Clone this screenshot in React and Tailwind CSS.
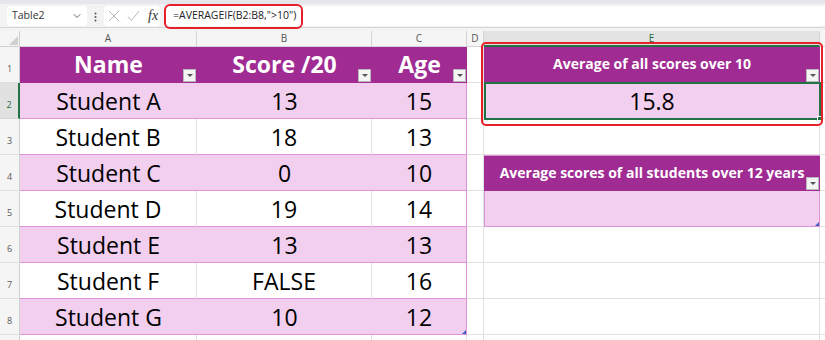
import React from "react";
import { ChevronDown } from "lucide-react";

function Filter() {
  return (
    <div className="absolute right-[1px] bottom-[1px] w-[13px] h-[13px] bg-[#f4f4f4] border border-[#b8b8b8] flex items-center justify-center">
      <div className="w-0 h-0 border-x-[3px] border-x-transparent border-t-[3px] border-t-[#555]" />
    </div>
  );
}

function ResizeMark() {
  return (
    <div className="absolute right-0 bottom-0 w-0 h-0 border-l-[4px] border-l-transparent border-b-[4px] border-b-[#3f5bbf]" />
  );
}

const rows = [
  ["Student A", "13", "15"],
  ["Student B", "18", "13"],
  ["Student C", "0", "10"],
  ["Student D", "19", "14"],
  ["Student E", "13", "13"],
  ["Student F", "FALSE", "16"],
  ["Student G", "10", "12"],
];

function RowHeader({ n, selected }) {
  return (
    <div
      className={
        selected
          ? "h-[36px] flex items-end justify-center pb-[7px] text-[9px] text-[#1e6b41] bg-[#e1e1e1] border-r-2 border-r-[#217346] border-b border-b-[#d6d6d6]"
          : "h-[36px] flex items-end justify-center pb-[7px] text-[9px] text-[#555] bg-[#f5f5f5] border-r border-r-[#cfcfcf] border-b border-b-[#dedede]"
      }
    >
      {n}
    </div>
  );
}

function ECell({ r }) {
  if (r === 1)
    return (
      <div className="relative h-[36px] bg-[#a02b93] text-white font-bold text-[14px] flex items-center justify-center pb-[3px]">
        Average of all scores over 10
        <Filter />
      </div>
    );
  if (r === 2)
    return (
      <div className="h-[36px] bg-[#f2ceef] text-[23px] text-black flex items-center justify-center pt-[1px]">
        15.8
      </div>
    );
  if (r === 4)
    return (
      <div className="relative h-[36px] bg-[#a02b93] text-white font-bold text-[14px] flex items-center justify-center pb-[2px] border-t border-t-[#dd93d6]">
        Average scores of all students over 12 years
        <Filter />
      </div>
    );
  if (r === 5)
    return (
      <div className="relative h-[36px] bg-[#f2ceef] border-x border-b border-[#dd93d6]">
        <ResizeMark />
      </div>
    );
  return <div className="h-[36px] bg-white border-r border-b border-[#e1e1e1]" />;
}

export default function App() {
  return (
    <div className="w-[825px] h-[340px] overflow-hidden bg-white relative font-['Open_Sans',sans-serif] text-black">
      {/* Toolbar */}
      <div className="h-[4px] bg-[#e5e7ea]" />
      <div className="h-[23px] flex bg-[#f3f3f3]">
        <div className="ml-[7px] mt-[2px] w-[80px] h-[20px] bg-white rounded-[4px] flex items-center justify-between pl-[5px] pr-[4px]">
          <span className="text-[10.5px] text-[#333]">Table2</span>
          <ChevronDown size={12} strokeWidth={1.6} color="#444" />
        </div>
        <div className="w-[17px] flex items-center justify-center mt-[2px]">
          <svg width="3" height="10" viewBox="0 0 3 10">
            <circle cx="1.5" cy="1.5" r="1" fill="#555" />
            <circle cx="1.5" cy="5" r="1" fill="#555" />
            <circle cx="1.5" cy="8.5" r="1" fill="#555" />
          </svg>
        </div>
        <div className="mt-[2px] w-[56px] h-[20px] bg-white rounded-[4px] flex items-center pl-[3px]">
          <svg width="12" height="12" viewBox="0 0 12 12" className="ml-[1px]">
            <path d="M1 1 L11 11 M11 1 L1 11" stroke="#b8b8b8" strokeWidth="1" fill="none" />
          </svg>
          <svg width="13" height="12" viewBox="0 0 13 12" className="ml-[7px]">
            <path d="M1 6.5 L4.5 10.5 L12 1" stroke="#b8b8b8" strokeWidth="1" fill="none" />
          </svg>
          <span className="ml-[8px] font-['Liberation_Serif',serif] italic text-[14px] text-[#333] leading-none">
            fx
          </span>
        </div>
        <div className="ml-[4px] mt-[2px] flex-1 h-[20px] bg-white flex items-center pl-[9px]">
          <span className="text-[10.5px] text-[#222]">=AVERAGEIF(B2:B8,"&gt;10")</span>
        </div>
      </div>
      <div className="h-[1px] bg-[#d5d5d5]" />
      <div className="h-[3px] bg-[#f3f3f3]" />

      {/* Grid */}
      <div className="relative grid grid-cols-[20px_177px_175px_95px_17px_336px_5px]">
        {/* column headers */}
        <div className="relative h-[16px] bg-[#f5f5f5] border-r border-b border-[#cfcfcf]">
          <div className="absolute right-[1px] bottom-[1px] w-0 h-0 border-l-[9px] border-l-transparent border-b-[9px] border-b-[#d0d0d0]" />
        </div>
        <div className="h-[16px] bg-[#f5f5f5] border-r border-b border-[#d4d4d4] text-[10px] text-[#555] flex items-center justify-center">A</div>
        <div className="h-[16px] bg-[#f5f5f5] border-r border-b border-[#d4d4d4] text-[10px] text-[#555] flex items-center justify-center">B</div>
        <div className="h-[16px] bg-[#f5f5f5] border-r border-b border-[#d4d4d4] text-[10px] text-[#555] flex items-center justify-center">C</div>
        <div className="h-[16px] bg-[#f5f5f5] border-r border-b border-[#d4d4d4] text-[10px] text-[#555] flex items-center justify-center">D</div>
        <div className="h-[16px] bg-[#e3e3e3] border-r border-r-[#d4d4d4] border-b-2 border-b-[#217346] text-[10px] text-[#1e6b41] flex items-center justify-center">E</div>
        <div className="h-[16px] bg-[#f5f5f5] border-b border-[#d4d4d4]" />

        {/* Row 1: table header */}
        <RowHeader n={1} />
        <div className="relative h-[36px] bg-[#a02b93] text-white font-bold text-[23px] flex items-center justify-center pb-[1px]">
          Name
          <Filter />
        </div>
        <div className="relative h-[36px] bg-[#a02b93] text-white font-bold text-[23px] flex items-center justify-center pb-[1px]">
          Score /20
          <Filter />
        </div>
        <div className="relative h-[36px] bg-[#a02b93] text-white font-bold text-[23px] flex items-center justify-center pb-[1px]">
          Age
          <Filter />
        </div>
        <div className="h-[36px] bg-white border-r border-b border-[#e1e1e1]" />
        <ECell r={1} />
        <div className="h-[36px] bg-white border-b border-[#e1e1e1]" />

        {rows.map((row, i) => {
          const r = i + 2;
          const pink = i % 2 === 0;
          const last = i === rows.length - 1;
          return (
            <React.Fragment key={r}>
              <RowHeader n={r} selected={r === 2} />
              <div
                className={
                  pink
                    ? "h-[36px] bg-[#f2ceef] border-b border-b-[#dd93d6] text-[23px] flex items-center justify-center pt-[1px]"
                    : "h-[36px] bg-white border-b border-b-[#dd93d6] border-r border-r-[#e1e1e1] text-[23px] flex items-center justify-center pt-[1px]"
                }
              >
                {row[0]}
              </div>
              <div
                className={
                  pink
                    ? "h-[36px] bg-[#f2ceef] border-b border-b-[#dd93d6] text-[23px] flex items-center justify-center pt-[1px]"
                    : "h-[36px] bg-white border-b border-b-[#dd93d6] border-r border-r-[#e1e1e1] text-[23px] flex items-center justify-center pt-[1px]"
                }
              >
                {row[1]}
              </div>
              <div
                className={
                  pink
                    ? "relative h-[36px] bg-[#f2ceef] border-b border-r border-[#dd93d6] text-[23px] flex items-center justify-center pt-[1px]"
                    : "relative h-[36px] bg-white border-b border-r border-[#dd93d6] text-[23px] flex items-center justify-center pt-[1px]"
                }
              >
                {row[2]}
                {last && <ResizeMark />}
              </div>
              <div className="h-[36px] bg-white border-r border-b border-[#e1e1e1]" />
              <ECell r={r} />
              <div className="h-[36px] bg-white border-b border-[#e1e1e1]" />
            </React.Fragment>
          );
        })}

        {/* Row 9 partial (number hidden below the fold) */}
        <div className="h-[36px] bg-[#f5f5f5] border-r border-r-[#cfcfcf]" />
        <div className="h-[36px] bg-white border-r border-[#e1e1e1]" />
        <div className="h-[36px] bg-white border-r border-[#e1e1e1]" />
        <div className="h-[36px] bg-white border-r border-[#e1e1e1]" />
        <div className="h-[36px] bg-white border-r border-[#e1e1e1]" />
        <div className="h-[36px] bg-white border-r border-[#e1e1e1]" />
        <div className="h-[36px] bg-white" />

        {/* Selected cell E2 */}
        <div className="absolute left-[484px] top-[51px] w-[337px] h-[38px] border-2 border-[#217346] pointer-events-none">
          <div className="absolute -right-[3px] -bottom-[3px] w-[5px] h-[5px] bg-[#217346] border border-white" />
        </div>
      </div>

      {/* Red highlight boxes */}
      <div className="absolute left-[164px] top-[4px] w-[139px] h-[25px] border-2 border-[#e5202a] rounded-[6px] pointer-events-none" />
      <div className="absolute left-[481px] top-[42px] w-[342px] h-[84px] border-2 border-[#e5202a] rounded-[5px] pointer-events-none" />
    </div>
  );
}
